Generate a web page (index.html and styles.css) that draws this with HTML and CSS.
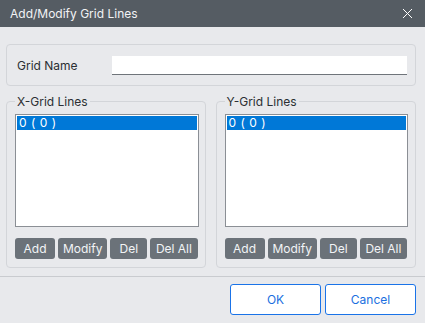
FILE: index.html
```html
<!DOCTYPE html>
<html>
<head>
<meta charset="utf-8">
<link rel="stylesheet" href="styles.css">
</head>
<body>
<div class="dialog">
  <div class="titlebar">
    <span class="title">Add/Modify Grid Lines</span>
    <svg class="close" width="11" height="11" viewBox="0 0 11 11"><path d="M1 1L10 10M10 1L1 10" stroke="#ffffff" stroke-width="1" fill="none"/></svg>
  </div>
  <div class="content">
    <div class="namebox">
      <span class="label">Grid Name</span>
      <div class="input"></div>
    </div>
    <div class="groups">
      <fieldset class="group">
        <legend>X-Grid Lines</legend>
        <div class="list"><div class="item">0 ( 0 )</div></div>
        <div class="btns">
          <button class="btn">Add</button>
          <button class="btn">Modify</button>
          <button class="btn">Del</button>
          <button class="btn">Del All</button>
        </div>
      </fieldset>
      <fieldset class="group">
        <legend>Y-Grid Lines</legend>
        <div class="list"><div class="item">0 ( 0 )</div></div>
        <div class="btns">
          <button class="btn">Add</button>
          <button class="btn">Modify</button>
          <button class="btn">Del</button>
          <button class="btn">Del All</button>
        </div>
      </fieldset>
    </div>
  </div>
  <div class="footer">
    <button class="fbtn">OK</button>
    <button class="fbtn">Cancel</button>
  </div>
</div>
</body>
</html>
```
FILE: styles.css
```css
html, body {
  margin: 0;
  padding: 0;
}
body {
  font-family: Inter, "Liberation Sans", sans-serif;
  font-size: 12px;
  background: #e8e9ec;
}
.dialog {
  width: 425px;
  height: 323px;
  background: #e8e9ec;
  display: flex;
  flex-direction: column;
}
.titlebar {
  height: 27px;
  background: #555c63;
  display: flex;
  align-items: center;
  justify-content: space-between;
  padding: 0 12px 0 10px;
  color: #f2f3f5;
  flex: none;
}
.title {
  font-size: 12px;
}
.close {
  display: block;
}
.content {
  padding: 17px 9px 0 6px;
}
.namebox {
  height: 40px;
  border: 1px solid #d3d5d9;
  border-radius: 4px;
  display: flex;
  align-items: center;
  padding: 0 8px 0 10px;
}
.label {
  width: 95px;
  color: #2b2f33;
  font-size: 12px;
  padding-top: 1px;
}
.input {
  flex: 1;
  height: 18px;
  background: #ffffff;
  border-bottom: 1px solid #6f747a;
  margin-top: 1px;
}
.groups {
  display: flex;
  gap: 10px;
  margin-top: 8px;
}
.group {
  flex: 1;
  margin: 0;
  border: 1px solid #d3d5d9;
  border-radius: 4px;
  padding: 5px 6px 8px 8px;
  min-width: 0;
}
.group legend {
  padding: 0 2px;
  color: #2b2f33;
  font-size: 12px;
}
.group + .group {
  padding-right: 7px;
}
.list {
  height: 109px;
  background: #ffffff;
  border: 1px solid #8b8f95;
  padding: 1px;
}
.item {
  height: 14px;
  line-height: 14px;
  background: #0078d7;
  color: #ffffff;
  padding-left: 2px;
  font-size: 12px;
  letter-spacing: 0.5px;
}
.btns {
  display: grid;
  grid-template-columns: 40fr 49fr 37fr 47fr;
  gap: 3px;
  margin-top: 11px;
  padding-right: 1px;
}
.btn {
  height: 21px;
  border: none;
  border-radius: 3px;
  background: #6b7279;
  color: #f2f4f6;
  font-family: Inter, "Liberation Sans", sans-serif;
  font-size: 12px;
  padding: 0;
}
.footer {
  margin-top: 8px;
  border-top: 1px solid #c9cbcf;
  display: flex;
  justify-content: flex-end;
  gap: 4px;
  padding: 7px 9px 0 0;
}
.fbtn {
  width: 91px;
  height: 31px;
  background: #ffffff;
  border: 1px solid #1a73e8;
  border-radius: 3px;
  color: #1a6fe0;
  font-family: Inter, "Liberation Sans", sans-serif;
  font-size: 12px;
  padding: 0;
}
```
